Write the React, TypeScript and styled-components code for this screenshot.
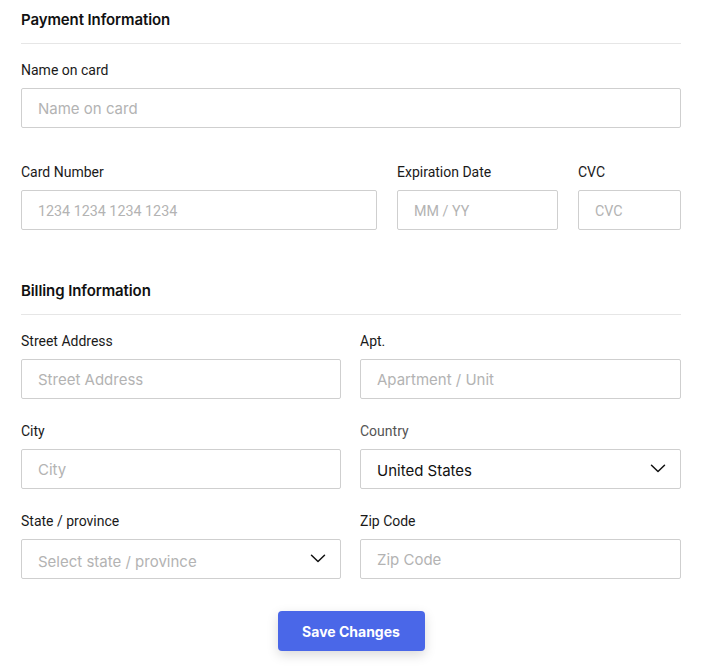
import styled, { createGlobalStyle } from "styled-components";

const GlobalStyle = createGlobalStyle`
    * { box-sizing:border-box; }
    body { margin:0; background:#fff; font-family:Roboto, "Liberation Sans", sans-serif; color:#1a1a1a; }
`

const Page = styled.div`
    width:660px; margin-left:21px;
    padding:10px 0 16px;
`

const SectionTitle = styled.h2`
    margin:0; font-family:Inter, sans-serif; font-size:15px; font-weight:600;
    line-height:20px; color:#111; letter-spacing:-0.1px;
    padding-bottom:13px;
    border-bottom:1px solid #e6e6e6;
`

const Section = styled.section<{ gapTop?: number }>`
    margin-top:${p => p.gapTop ?? 0}px;
`

const Row = styled.div<{ cols: string; top: number; gap?: number }>`
    display:grid; grid-template-columns:${p => p.cols};
    column-gap:${p => p.gap ?? 20}px; margin-top:${p => p.top}px;
`

const Field = styled.div`
    display:flex; flex-direction:column;
`

const Label = styled.label<{ muted?: boolean }>`
    font-size:14px; line-height:20px; margin-bottom:8px;
    color:${p => p.muted ? '#555' : '#1a1a1a'};
`

const Input = styled.input<{ card?: boolean }>`
    height:40px; width:100%;
    border:1px solid #cfcfcf; border-radius:2px;
    padding:${p => p.card ? '2px 16px 0' : '1px 16px 0'};
    font-family:${p => p.card ? 'Roboto, sans-serif' : 'Inter, sans-serif'};
    font-size:${p => p.card ? '14.3px' : '15px'};
    color:#1a1a1a; background:#fff; outline:none;
    &::placeholder { color:#b3b3b3; }
`

const SelectBox = styled.div<{ placeholder?: boolean }>`
    height:40px; border:1px solid #cfcfcf; border-radius:2px;
    padding:0 14px 0 16px;
    display:flex; align-items:center; justify-content:space-between;
    font-family:Inter, sans-serif; font-size:15px;
    color:${p => p.placeholder ? '#b3b3b3' : '#111'};
    padding-top:${p => p.placeholder ? '4px' : '3px'};
    svg { margin-top:${p => p.placeholder ? '-6px' : '-5px'}; }
`

const Footer = styled.div`
    display:flex; justify-content:center; margin-top:32px;
`

const SaveButton = styled.button`
    width:147px; height:40px; border:none; border-radius:4px;
    background:#4a67e8; color:#fff;
    font-family:Inter, sans-serif; font-weight:700; font-size:14px;
    box-shadow:0 4px 12px rgba(0,0,0,0.15);
    cursor:pointer;
`

const Chevron = () => (
    <svg width="16" height="9" viewBox="0 0 16 9" fill="none">
        <path d="M1.5 1.2l6.5 6.3 6.5-6.3" stroke="#111" strokeWidth="1.5" strokeLinecap="round" strokeLinejoin="round" />
    </svg>
)

const App = () => {
    return (
        <>
            <GlobalStyle />
            <Page>
                <Section>
                    <SectionTitle>Payment Information</SectionTitle>
                    <Row cols="1fr" top={16}>
                        <Field>
                            <Label>Name on card</Label>
                            <Input placeholder="Name on card" />
                        </Field>
                    </Row>
                    <Row cols="356px 161px 103px" top={34}>
                        <Field>
                            <Label>Card Number</Label>
                            <Input card placeholder="1234 1234 1234 1234" />
                        </Field>
                        <Field>
                            <Label>Expiration Date</Label>
                            <Input card placeholder="MM / YY" />
                        </Field>
                        <Field>
                            <Label>CVC</Label>
                            <Input card placeholder="CVC" />
                        </Field>
                    </Row>
                </Section>
                <Section gapTop={51}>
                    <SectionTitle>Billing Information</SectionTitle>
                    <Row cols="320px 321px" gap={19} top={16}>
                        <Field>
                            <Label>Street Address</Label>
                            <Input placeholder="Street Address" />
                        </Field>
                        <Field>
                            <Label>Apt.</Label>
                            <Input placeholder="Apartment / Unit" />
                        </Field>
                    </Row>
                    <Row cols="320px 321px" gap={19} top={22}>
                        <Field>
                            <Label>City</Label>
                            <Input placeholder="City" />
                        </Field>
                        <Field>
                            <Label muted>Country</Label>
                            <SelectBox>
                                <span>United States</span>
                                <Chevron />
                            </SelectBox>
                        </Field>
                    </Row>
                    <Row cols="320px 321px" gap={19} top={22}>
                        <Field>
                            <Label>State / province</Label>
                            <SelectBox placeholder>
                                <span>Select state / province</span>
                                <Chevron />
                            </SelectBox>
                        </Field>
                        <Field>
                            <Label>Zip Code</Label>
                            <Input placeholder="Zip Code" />
                        </Field>
                    </Row>
                </Section>
                <Footer>
                    <SaveButton>Save Changes</SaveButton>
                </Footer>
            </Page>
        </>
    )
}

export default App;
